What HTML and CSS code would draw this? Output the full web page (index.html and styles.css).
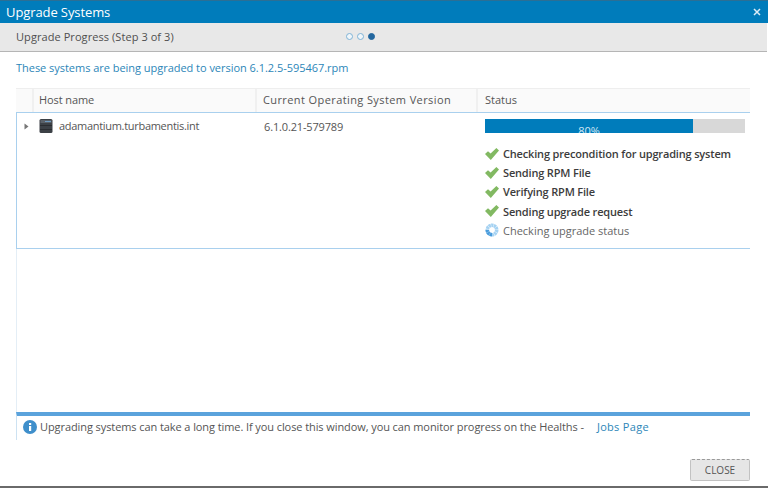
FILE: index.html
```html
<!DOCTYPE html>
<html lang="en">
<head>
<meta charset="utf-8">
<title>Upgrade Systems</title>
<link rel="stylesheet" href="styles.css">
</head>
<body>
<div class="dialog">
  <header class="titlebar">
    <span class="title">Upgrade Systems</span>
    <svg class="close-x" width="8" height="8" viewBox="0 0 8 8"><path d="M1 1l6 6M7 1L1 7" stroke="#dcecf6" stroke-width="1.5"/></svg>
  </header>
  <div class="stepbar">
    <span class="step-label">Upgrade Progress (Step 3 of 3)</span>
    <div class="dots"><i class="dot"></i><i class="dot"></i><i class="dot dot-on"></i></div>
  </div>
  <main class="content">
    <p class="lead">These systems are being upgraded to version 6.1.2.5-595467.rpm</p>
    <div class="grid">
      <div class="grid-head">
        <div class="hc hc-exp"></div>
        <div class="hc hc-host">Host name</div>
        <div class="hc hc-ver">Current Operating System Version</div>
        <div class="hc hc-status">Status</div>
      </div>
      <div class="grid-row">
        <div class="c-exp"><svg width="5" height="7" viewBox="0 0 5 7"><path d="M0.5 0.5L4.5 3.5L0.5 6.5Z" fill="#777"/></svg></div>
        <div class="c-host">
          <svg width="14" height="14" viewBox="0 0 14 14"><rect x="0.5" y="0" width="13" height="14" rx="1.5" fill="#3c4146"/><rect x="1.5" y="1" width="11" height="3" fill="#5a6168"/><rect x="6" y="2" width="6" height="1" fill="#6d9cc4"/><rect x="1" y="6" width="12" height="1" fill="#2a2d31"/><rect x="1" y="10" width="12" height="1" fill="#2a2d31"/></svg>
          <span class="host-name">adamantium.turbamentis.int</span>
        </div>
        <div class="c-ver">6.1.0.21-579789</div>
        <div class="c-status">
          <div class="progress"><div class="progress-fill" style="width:80%"><span>80%</span></div></div>
          <ul class="tasks">
            <li class="task done"><svg class="chk" width="14" height="12" viewBox="0 0 14 12"><path d="M0 6L3 3.2L5.6 5.6L11.4 0L14 2.4L5.8 12Z" fill="#82b962"/></svg>Checking precondition for upgrading system</li>
            <li class="task done"><svg class="chk" width="14" height="12" viewBox="0 0 14 12"><path d="M0 6L3 3.2L5.6 5.6L11.4 0L14 2.4L5.8 12Z" fill="#82b962"/></svg>Sending RPM File</li>
            <li class="task done"><svg class="chk" width="14" height="12" viewBox="0 0 14 12"><path d="M0 6L3 3.2L5.6 5.6L11.4 0L14 2.4L5.8 12Z" fill="#82b962"/></svg>Verifying RPM File</li>
            <li class="task done"><svg class="chk" width="14" height="12" viewBox="0 0 14 12"><path d="M0 6L3 3.2L5.6 5.6L11.4 0L14 2.4L5.8 12Z" fill="#82b962"/></svg>Sending upgrade request</li>
            <li class="task"><svg class="chk" width="14" height="14" viewBox="0 0 14 14"><circle cx="7" cy="7" r="4.7" fill="none" stroke="#a5d2f2" stroke-width="3.6" stroke-dasharray="2.2 0.4"/><path d="M7 11.7a4.7 4.7 0 0 1-4.7-4.7" fill="none" stroke="#4a9cdc" stroke-width="3.6" stroke-dasharray="2.2 0.4"/></svg>Checking upgrade status</li>
          </ul>
        </div>
      </div>
      <div class="grid-empty"></div>
    </div>
    <div class="notice">
      <svg width="14" height="14" viewBox="0 0 14 14"><circle cx="7" cy="7" r="7" fill="#3f8fcb"/><rect x="6" y="6" width="2.2" height="5" fill="#fff"/><rect x="6" y="3" width="2.2" height="2" fill="#fff"/></svg>
      <span class="notice-text">Upgrading systems can take a long time. If you close this window, you can monitor progress on the Healths -</span>
      <a class="notice-link" href="#">Jobs Page</a>
    </div>
  </main>
  <footer class="footer"><button class="close-btn" type="button">CLOSE</button></footer>
</div>
</body>
</html>
```
FILE: styles.css
```css
* { box-sizing: border-box; }
html, body { margin: 0; height: 100%; }
body { font-family: "Open Sans", "Liberation Sans", sans-serif; font-size: 11px; color: #4a4a4a; background: #fff; overflow: hidden; }
.dialog { width: 768px; height: 488px; display: flex; flex-direction: column; border-top: 1px solid #2b6f95; border-bottom: 2px solid #6a6a6a; }
.titlebar { height: 22px; flex: none; background: #007cbb; color: #fff; display: flex; align-items: center; justify-content: space-between; padding: 0 7px 0 6px; }
.title { font-size: 13px; letter-spacing: -0.1px; }
.stepbar { height: 29px; flex: none; width: 767px; background: #e8e8e8; border-bottom: 1px solid #b5b5b5; position: relative; display: flex; align-items: center; padding: 0 16px 2px; }
.step-label { font-size: 11px; color: #4f4f4f; letter-spacing: 0.07px; }
.dots { position: absolute; left: 346px; top: 10px; display: flex; gap: 4px; }
.dot { width: 7px; height: 7px; border-radius: 50%; border: 1px solid #7fb3d6; background: #f0f6fa; }
.dot-on { background: #23679f; border-color: #23679f; }
.content { flex: none; height: 388px; display: flex; flex-direction: column; padding: 0 18px 0 16px; }
.lead { flex: none; margin: 9px 0 0; height: 27px; line-height: 14px; color: #2c86b8; font-size: 11px; letter-spacing: -0.03px; }
.grid { flex: none; display: flex; flex-direction: column; height: 324px; }
.grid-head { height: 24px; flex: none; display: flex; background: #fafafa; border-top: 1px solid #eee; }
.hc { height: 100%; padding: 0 7px; line-height: 21px; border-right: 2px solid #f0f0f0; color: #555; flex: none; }
.hc-exp { width: 18px; padding: 0; }
.hc-host { width: 223px; padding-left: 5px; letter-spacing: -0.1px; }
.hc-ver { width: 221px; padding-left: 6px; letter-spacing: 0.4px; }
.hc-status { flex: 1; border-right: 0; }
.grid-row { height: 137px; flex: none; display: flex; border: 1px solid #a9d0ee; border-right: 0; }
.c-exp { width: 17px; flex: none; padding: 10px 0 0 7px; line-height: 0; }
.c-host { width: 223px; flex: none; display: flex; gap: 6px; padding: 6px 5px 0; align-items: flex-start; color: #555; letter-spacing: -0.3px; }
.host-name { line-height: 13px; }
.c-ver { width: 221px; flex: none; padding: 6px 7px 0; color: #555; letter-spacing: -0.15px; }
.c-status { flex: 1; padding: 6px 5px 0 7px; }
.progress { height: 14px; background: #d8d8d8; overflow: hidden; }
.progress-fill { height: 100%; background: #007cbb; color: #cfe6f3; text-align: center; line-height: 24px; }
.tasks { list-style: none; margin: 11px 0 0; padding: 0; }
.task { height: 19.2px; display: flex; align-items: center; gap: 4px; color: #666; white-space: nowrap; }
.done { color: #3c3c3c; font-weight: 600; letter-spacing: -0.17px; }
.chk { flex: none; }
.grid-empty { flex: 1; border-left: 1px solid #e4eef6; }
.notice { height: 28px; flex: none; border-top: 4px solid #5ba3dc; border-left: 1px solid #cde2f2; display: flex; align-items: center; padding: 0 0 2px 6px; color: #555; letter-spacing: -0.085px; }
.notice-text { margin: 0 0 2px 3px; }
.notice-link { margin: 0 0 2px 13px; color: #2c86b8; text-decoration: none; letter-spacing: 0.3px; }
.footer { flex: 1; display: flex; justify-content: flex-end; align-items: flex-end; padding: 0 18px 5px 0; }
.close-btn { width: 60px; height: 22px; font: inherit; font-size: 10px; color: #555; background: #e6e6e6; border: 1px solid #c2c2c2; border-top: 1px dashed #999; border-radius: 2px; padding: 0; }
```
